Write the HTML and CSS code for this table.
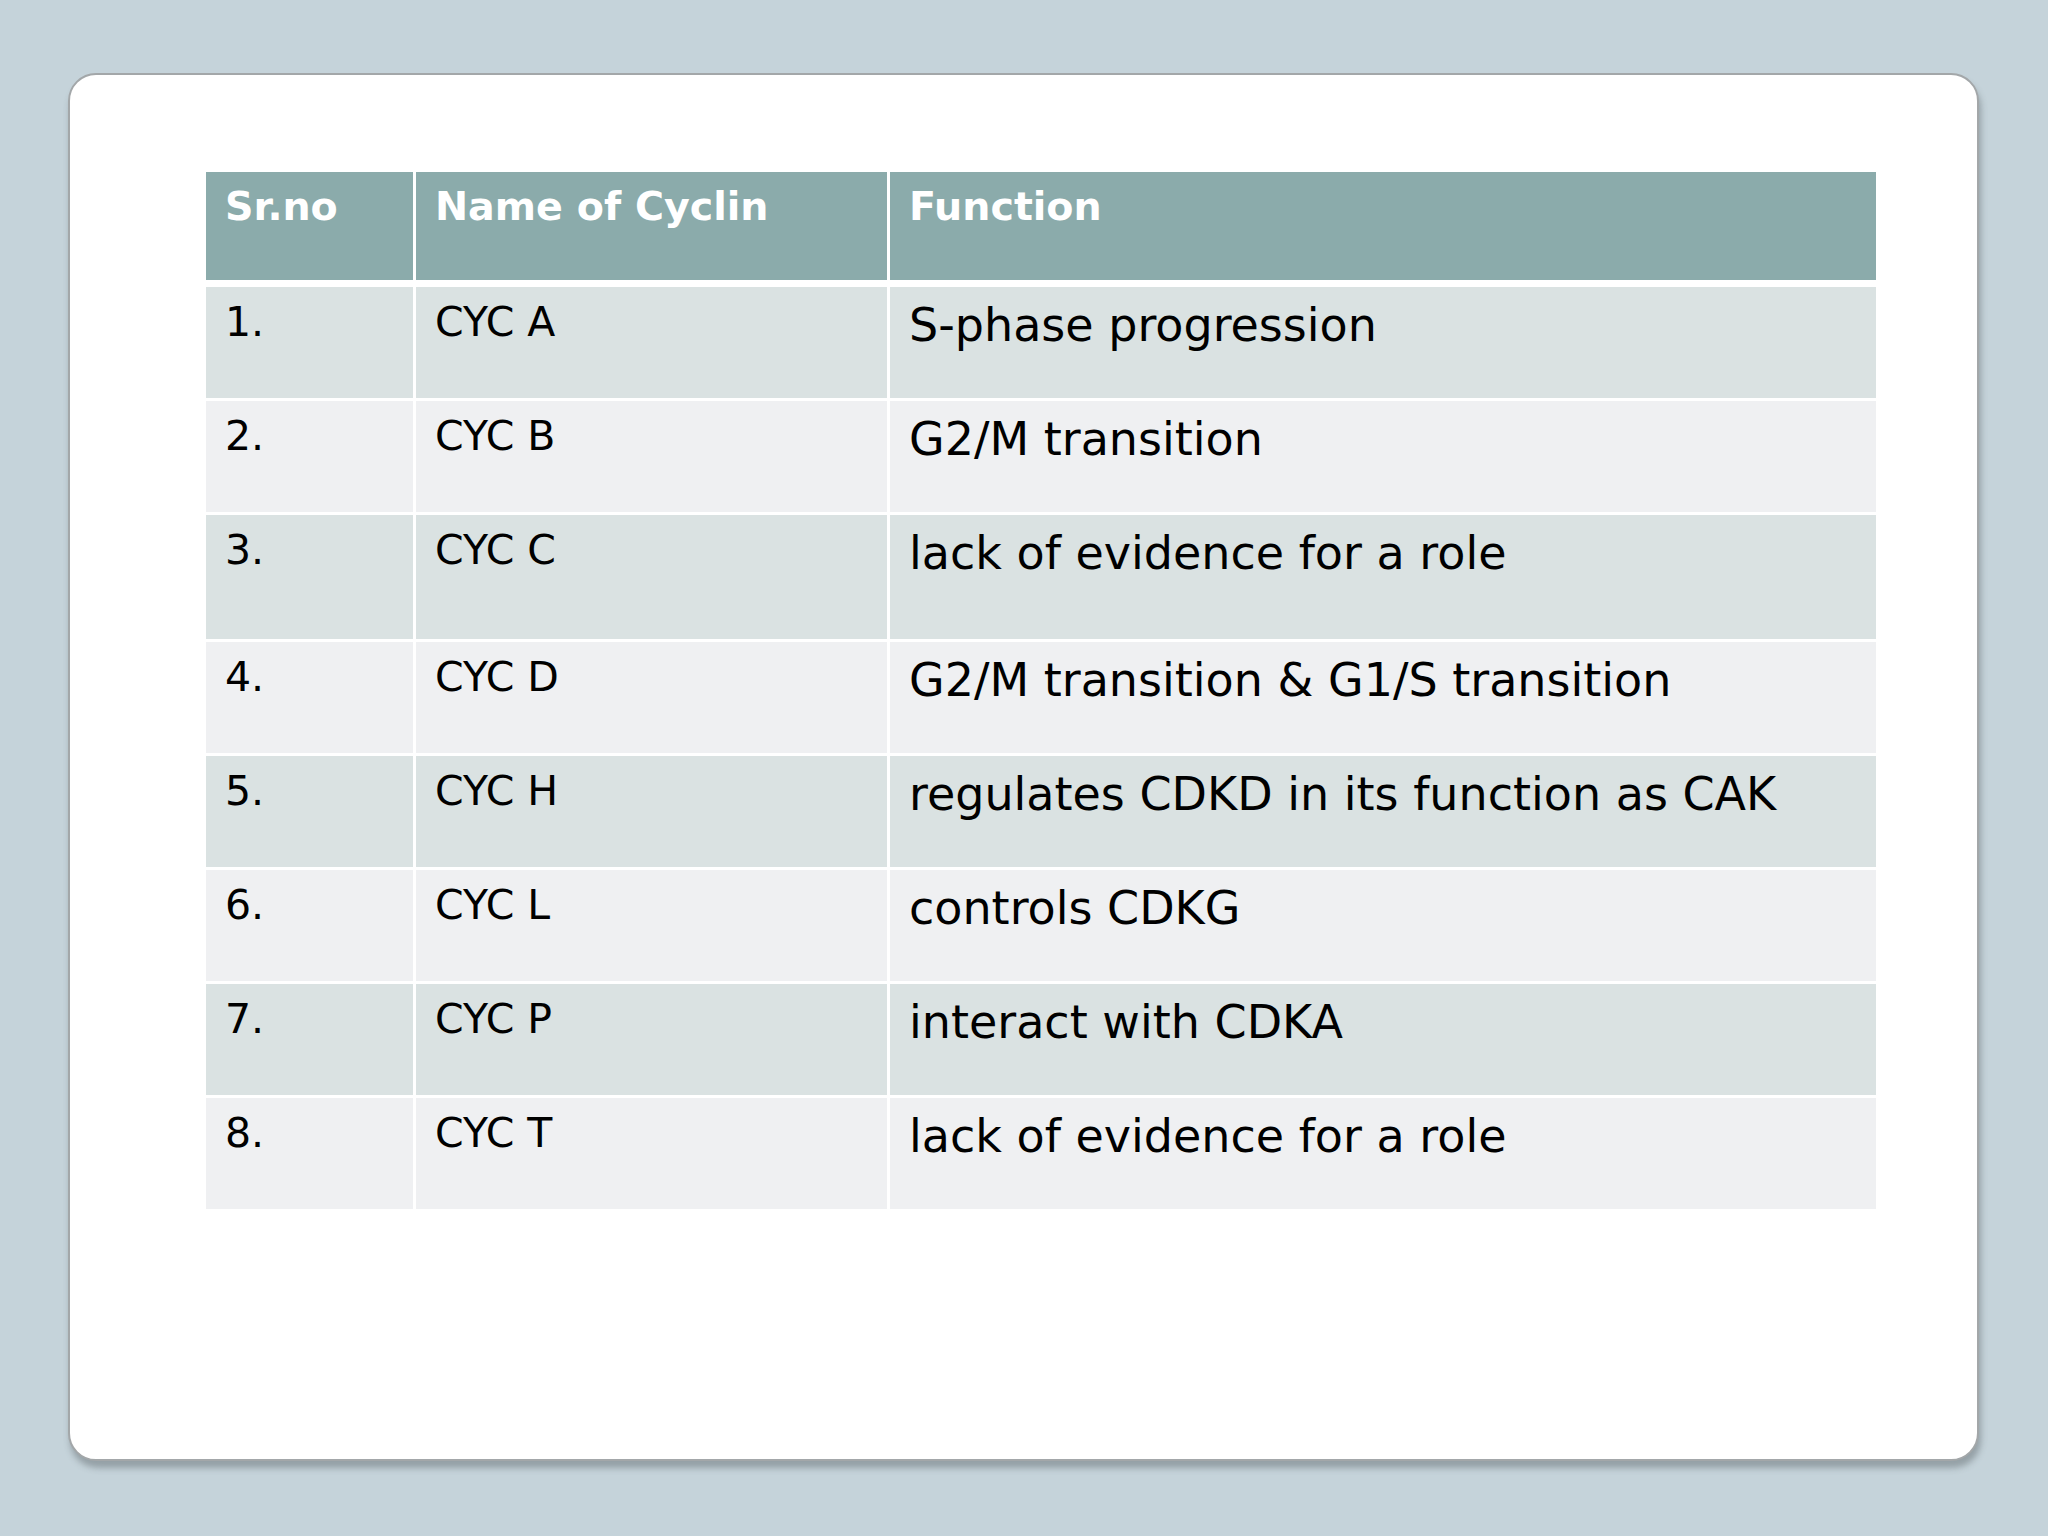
FILE: index.html
```html
<!DOCTYPE html>
<html>
<head>
<meta charset="utf-8">
<link rel="stylesheet" href="styles.css">
</head>
<body>
<div class="slide">
  <div class="card">
    <table class="cyclins">
      <thead>
        <tr>
          <th class="c-no">Sr.no</th>
          <th class="c-name">Name of Cyclin</th>
          <th class="c-fn">Function</th>
        </tr>
      </thead>
      <tbody>
        <tr class="odd"><td>1.</td><td>CYC A</td><td class="fn">S-phase progression</td></tr>
        <tr class="even"><td>2.</td><td>CYC B</td><td class="fn">G2/M transition</td></tr>
        <tr class="odd tall"><td>3.</td><td>CYC C</td><td class="fn">lack of evidence for a role</td></tr>
        <tr class="even"><td>4.</td><td>CYC D</td><td class="fn">G2/M transition &amp; G1/S transition</td></tr>
        <tr class="odd"><td>5.</td><td>CYC H</td><td class="fn">regulates CDKD in its function as CAK</td></tr>
        <tr class="even"><td>6.</td><td>CYC L</td><td class="fn">controls CDKG</td></tr>
        <tr class="odd"><td>7.</td><td>CYC P</td><td class="fn">interact with CDKA</td></tr>
        <tr class="even"><td>8.</td><td>CYC T</td><td class="fn">lack of evidence for a role</td></tr>
      </tbody>
    </table>
  </div>
</div>
</body>
</html>
```

FILE: styles.css
```css
html, body {
  margin: 0;
  padding: 0;
}
body {
  width: 2048px;
  height: 1536px;
  background: #c5d3da;
  font-family: "DejaVu Sans", Verdana, sans-serif;
  overflow: hidden;
}
.slide {
  padding: 73px 0 0 68px;
}
.card {
  box-sizing: border-box;
  width: 1911px;
  height: 1388px;
  background: #ffffff;
  border: 2px solid #a3a7a9;
  border-radius: 28px;
  box-shadow: 2px 7px 6px rgba(90, 100, 105, 0.45);
  padding: 94px 0 0 133px;
}
.cyclins {
  border-collapse: separate;
  border-spacing: 3px;
  table-layout: fixed;
  width: 1676px;
}
.cyclins th,
.cyclins td {
  text-align: left;
  vertical-align: top;
  padding: 15px 10px 0 19px;
  line-height: 1;
  box-sizing: border-box;
}
.cyclins th {
  background: #8babab;
  color: #ffffff;
  font-weight: bold;
  font-size: 39.6px;
  height: 112px;
  border-bottom: 4px solid #ffffff;
  background-clip: padding-box;
}
.c-no { width: 207px; }
.c-name { width: 471px; }
.c-fn { width: 986px; }
.cyclins td {
  font-size: 41px;
  color: #000000;
  height: 111px;
}
.cyclins td.fn {
  font-size: 46px;
}
.cyclins tr.tall td {
  height: 124px;
}
.odd td {
  background: #dae2e2;
}
.even td {
  background: #eff0f2;
}
```
